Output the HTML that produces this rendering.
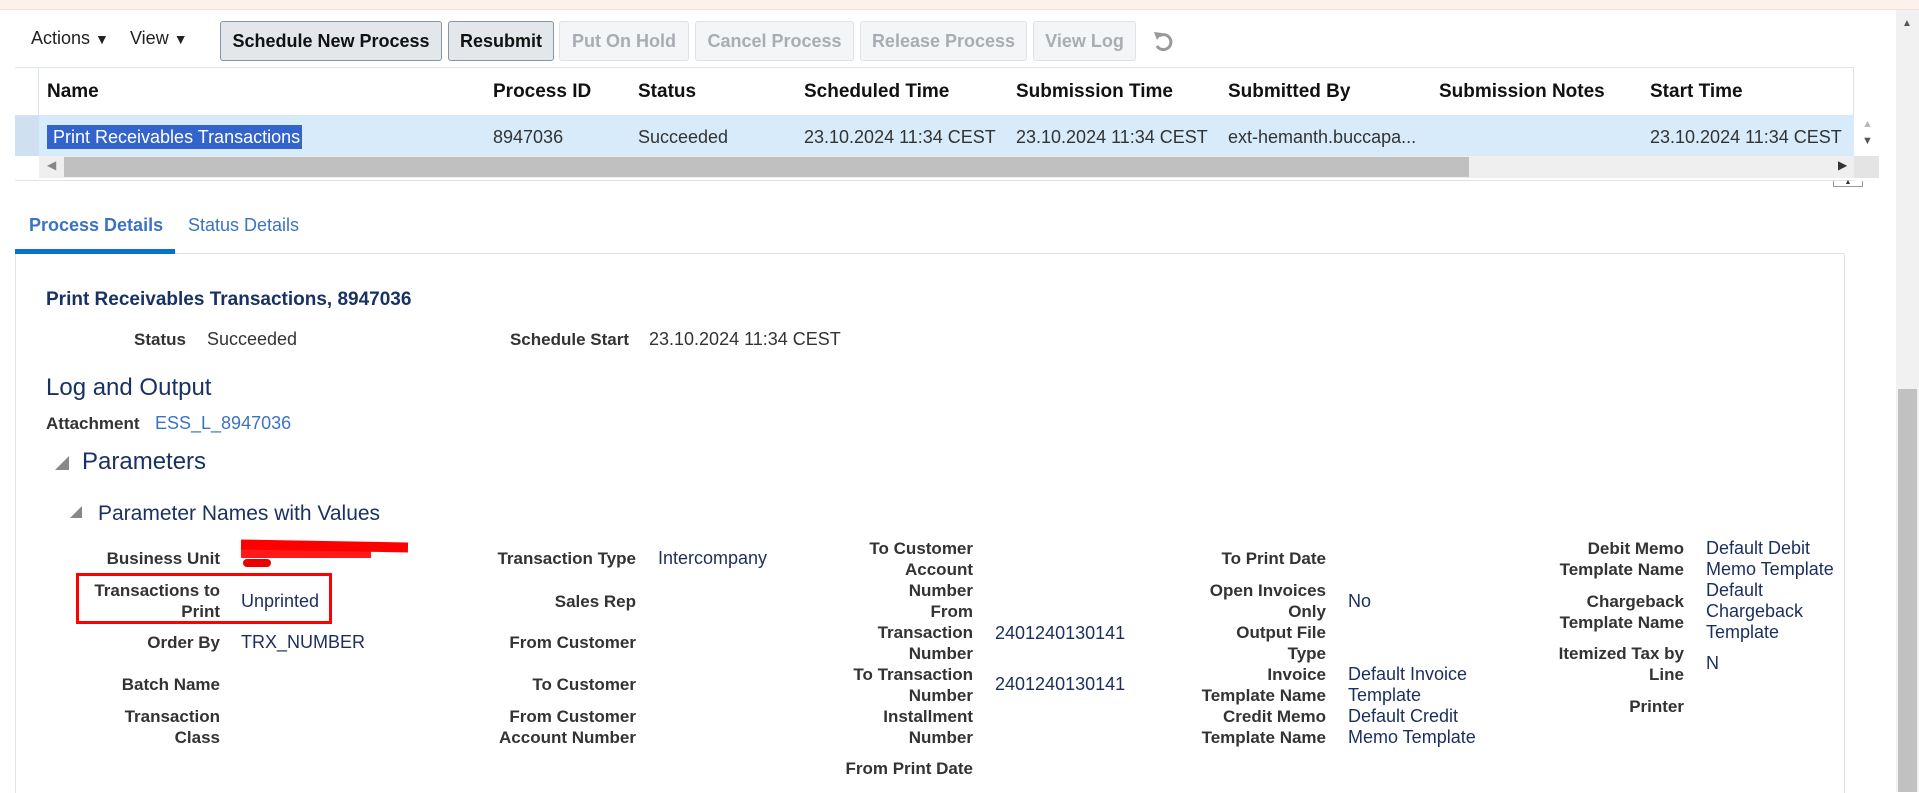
<!DOCTYPE html>
<html><head><meta charset="utf-8"><style>
*{margin:0;padding:0;box-sizing:border-box}
body{width:1919px;height:792px;overflow:hidden;background:#fff;font-family:"Liberation Sans",Arial,sans-serif;position:relative;color:#333}
.a{position:absolute;white-space:nowrap}
.btn{position:absolute;top:20px;height:40px;border-radius:3px;font-size:18px;font-weight:bold;text-align:center;line-height:38px}
.en{background:#e3e7eb;border:1px solid #8796a6;color:#111}
.dis{background:#f4f5f6;border:1px solid #dfe3e7;color:#a8adb3}
.th{position:absolute;top:80px;font-size:19px;font-weight:bold;color:#111}
.td{position:absolute;top:126px;font-size:18px;color:#333}
.l{position:absolute;width:260px;text-align:right;font-size:17px;font-weight:bold;color:#333;line-height:21px}
.v{position:absolute;font-size:18px;color:#1c2e5e;line-height:21px;white-space:nowrap}
.tri{position:absolute;width:0;height:0;border-left:14px solid transparent;border-bottom:14px solid #888}
#w{position:absolute;left:0;top:1px;width:1919px;height:792px}
</style></head><body>
<div class="a" style="left:0;top:0;width:1919px;height:10px;background:#fdf1ed;border-bottom:1px solid #f6ddd5"></div>
<div class="a" style="left:1896px;top:10px;width:23px;height:782px;background:#f1f1f1"></div>
<div class="a" style="left:1898px;top:389px;width:19px;height:403px;background:#c1c1c1"></div>
<div class="a" style="left:1902px;top:18px;font-size:10px;color:#555">▲</div>
<div id="w">
<div class="a" style="left:31px;top:27px;font-size:18px;color:#222">Actions <span style="font-size:14px">▼</span></div>
<div class="a" style="left:130px;top:27px;font-size:18px;color:#222">View <span style="font-size:14px">▼</span></div>
<div class="btn en" style="left:220px;width:222px">Schedule New Process</div>
<div class="btn en" style="left:448px;width:106px">Resubmit</div>
<div class="btn dis" style="left:559px;width:130px">Put On Hold</div>
<div class="btn dis" style="left:695px;width:159px">Cancel Process</div>
<div class="btn dis" style="left:860px;width:167px">Release Process</div>
<div class="btn dis" style="left:1033px;width:103px">View Log</div>
<svg class="a" style="left:1150px;top:27px" width="26" height="26" viewBox="0 0 26 26"><path d="M9 8 A7.5 7.5 0 1 1 7 18" fill="none" stroke="#999" stroke-width="3"/><path d="M4 4 L12 5 L7 12 Z" fill="#999"/></svg>

<div class="a" style="left:15px;top:66px;width:1839px;height:1px;background:#dde3ea"></div>
<div class="a" style="left:38px;top:66px;width:1px;height:49px;background:#dde3ea"></div>
<div class="a" style="left:1853px;top:66px;width:1px;height:111px;background:#dde3ea"></div>
<div class="a" style="left:15px;top:114px;width:1839px;height:1px;background:#dde3ea"></div>
<div class="th" style="left:47px">Name</div>
<div class="th" style="left:493px">Process ID</div>
<div class="th" style="left:638px">Status</div>
<div class="th" style="left:804px">Scheduled Time</div>
<div class="th" style="left:1016px">Submission Time</div>
<div class="th" style="left:1228px">Submitted By</div>
<div class="th" style="left:1439px">Submission Notes</div>
<div class="th" style="left:1650px">Start Time</div>
<div class="a" style="left:15px;top:115px;width:1839px;height:40px;background:#d7ebfb"></div>
<div class="a" style="left:15px;top:115px;width:24px;height:40px;background:#cfe0f0"></div>
<div class="a" style="left:47px;top:124px;width:255px;height:24px;background:#3264cc"></div>
<div class="td" style="left:53px;color:#fff">Print Receivables Transactions</div>
<div class="td" style="left:493px">8947036</div>
<div class="td" style="left:638px">Succeeded</div>
<div class="td" style="left:804px">23.10.2024 11:34 CEST</div>
<div class="td" style="left:1016px">23.10.2024 11:34 CEST</div>
<div class="td" style="left:1228px">ext-hemanth.buccapa...</div>
<div class="td" style="left:1650px">23.10.2024 11:34 CEST</div>
<div class="a" style="left:1862px;top:117px;font-size:11px;color:#bbb">▲</div>
<div class="a" style="left:1862px;top:134px;font-size:11px;color:#555">▼</div>
<div class="a" style="left:39px;top:155px;width:1815px;height:22px;background:#efefef"></div>
<div class="a" style="left:1854px;top:155px;width:25px;height:22px;background:#e4e4e4"></div>
<div class="a" style="left:64px;top:156px;width:1405px;height:20px;background:#c0c0c0"></div>
<div class="a" style="left:47px;top:157px;font-size:12px;color:#888">◀</div>
<div class="a" style="left:1838px;top:157px;font-size:12px;color:#333">▶</div>
<div class="a" style="left:15px;top:179px;width:1839px;height:1px;background:#dde3ea"></div>
<div class="a" style="left:1833px;top:180px;width:30px;height:6px;border:1px solid #999;border-top:none;font-size:7px;text-align:center;line-height:4px">▲</div>

<div class="a" style="left:29px;top:214px;font-size:18px;font-weight:bold;color:#3b73c4">Process Details</div>
<div class="a" style="left:188px;top:214px;font-size:18px;color:#3b73c4">Status Details</div>
<div class="a" style="left:15px;top:252px;width:1829px;height:1px;background:#dde3ea"></div>
<div class="a" style="left:15px;top:248px;width:160px;height:5px;background:#0a72cc"></div>
<div class="a" style="left:15px;top:253px;width:1px;height:539px;background:#dde3ea"></div>
<div class="a" style="left:1844px;top:253px;width:1px;height:539px;background:#dde3ea"></div>

<div class="a" style="left:46px;top:288px;font-size:19px;font-weight:bold;color:#1a3263">Print Receivables Transactions, 8947036</div>
<div class="l" style="left:-74px;top:328px">Status</div>
<div class="v" style="left:207px;top:328px;color:#333">Succeeded</div>
<div class="l" style="left:369px;top:328px">Schedule Start</div>
<div class="v" style="left:649px;top:328px;color:#333">23.10.2024 11:34 CEST</div>
<div class="a" style="left:46px;top:373px;font-size:24px;color:#1a3263">Log and Output</div>
<div class="a" style="left:46px;top:413px;font-size:17px;font-weight:bold;color:#333">Attachment</div>
<div class="a" style="left:155px;top:412px;font-size:18px;color:#3b73c4">ESS_L_8947036</div>
<div class="tri" style="left:55px;top:455px"></div>
<div class="a" style="left:82px;top:447px;font-size:24px;color:#1a3263">Parameters</div>
<div class="tri" style="left:70px;top:505px;border-left-width:12px;border-bottom-width:12px"></div>
<div class="a" style="left:98px;top:501px;font-size:21px;color:#1a3263">Parameter Names with Values</div>

<div class="l" style="left:-40px;top:547px">Business Unit</div>
<div class="a" style="left:241px;top:540px;width:167px;height:10px;background:#f00;transform:rotate(1deg)"></div>
<div class="a" style="left:241px;top:541px;width:130px;height:16px;background:#f00;opacity:.9"></div>
<div class="a" style="left:243px;top:558px;width:28px;height:8px;background:#e00;border-radius:4px"></div>
<div class="l" style="left:-40px;top:579px">Transactions to<br>Print</div>
<div class="v" style="left:241px;top:590px">Unprinted</div>
<div class="a" style="left:76px;top:572px;width:256px;height:51px;border:3px solid #f00"></div>
<div class="l" style="left:-40px;top:631px">Order By</div>
<div class="v" style="left:241px;top:631px">TRX_NUMBER</div>
<div class="l" style="left:-40px;top:673px">Batch Name</div>
<div class="l" style="left:-40px;top:705px">Transaction<br>Class</div>
<div class="l" style="left:376px;top:547px">Transaction Type</div>
<div class="v" style="left:658px;top:547px">Intercompany</div>
<div class="l" style="left:376px;top:590px">Sales Rep</div>
<div class="l" style="left:376px;top:631px">From Customer</div>
<div class="l" style="left:376px;top:673px">To Customer</div>
<div class="l" style="left:376px;top:705px">From Customer<br>Account Number</div>
<div class="l" style="left:713px;top:537px">To Customer<br>Account<br>Number<br>From<br>Transaction<br>Number<br>To Transaction<br>Number<br>Installment<br>Number</div>
<div class="l" style="left:713px;top:757px">From Print Date</div>
<div class="v" style="left:995px;top:622px">2401240130141</div>
<div class="v" style="left:995px;top:673px">2401240130141</div>
<div class="l" style="left:1066px;top:547px">To Print Date</div>
<div class="l" style="left:1066px;top:579px">Open Invoices<br>Only<br>Output File<br>Type<br>Invoice<br>Template Name<br>Credit Memo<br>Template Name</div>
<div class="v" style="left:1348px;top:590px">No</div>
<div class="v" style="left:1348px;top:663px">Default Invoice<br>Template<br>Default Credit<br>Memo Template</div>
<div class="l" style="left:1424px;top:537px">Debit Memo<br>Template Name</div>
<div class="v" style="left:1706px;top:537px">Default Debit<br>Memo Template</div>
<div class="l" style="left:1424px;top:590px">Chargeback<br>Template Name</div>
<div class="v" style="left:1706px;top:579px">Default<br>Chargeback<br>Template</div>
<div class="l" style="left:1424px;top:642px">Itemized Tax by<br>Line</div>
<div class="v" style="left:1706px;top:652px">N</div>
<div class="l" style="left:1424px;top:695px">Printer</div>
</div>
</body></html>
